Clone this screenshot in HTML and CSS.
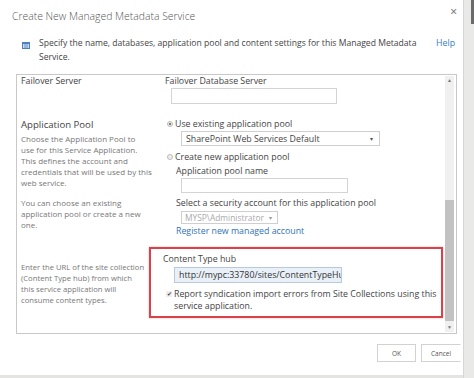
FILE: index.html
```html
<!DOCTYPE html>
<html>
<head>
<meta charset="utf-8">
<link rel="stylesheet" href="styles.css">
</head>
<body>
<div class="page">
  <div class="dialog">
    <div class="titlebar">
      <span class="title">Create New Managed Metadata Service</span>
      <span class="close">×</span>
    </div>
    <div class="intro">
      <svg class="icon" width="8" height="7" viewBox="0 0 8 7">
        <rect x="0.5" y="0.5" width="7" height="6" fill="#c9d9ee" stroke="#4f7fbf"/>
        <rect x="0.5" y="0.5" width="7" height="1.5" fill="#4f7fbf"/>
        <line x1="3" y1="2" x2="3" y2="7" stroke="#4f7fbf" stroke-width="0.8"/>
        <line x1="5" y1="2" x2="5" y2="7" stroke="#4f7fbf" stroke-width="0.8"/>
      </svg>
      <p class="intro-text">Specify the name, databases, application pool and content settings for this Managed Metadata<br>Service.</p>
      <a class="help">Help</a>
    </div>
    <div class="panel">
      <div class="panel-content">
        <section class="row row-failover">
          <div class="left"><div class="section-title">Failover Server</div></div>
          <div class="right">
            <div class="label">Failover Database Server</div>
            <div class="textbox tb-failover"></div>
          </div>
        </section>
        <section class="row row-pool">
          <div class="left">
            <div class="section-title big">Application Pool</div>
            <p class="desc">Choose the Application Pool to<br>use for this Service Application.<br>This defines the account and<br>credentials that will be used by this<br>web service.</p>
            <p class="desc desc-gap">You can choose an existing<br>application pool or create a new<br>one.</p>
          </div>
          <div class="right">
            <div class="option"><span class="radio checked"></span>Use existing application pool</div>
            <div class="select sel-pool"><span>SharePoint Web Services Default</span><span class="arrow">▾</span></div>
            <div class="option opt-new"><span class="radio"></span>Create new application pool</div>
            <div class="label indent">Application pool name</div>
            <div class="textbox tb-poolname"></div>
            <div class="label indent lbl-account">Select a security account for this application pool</div>
            <div class="select sel-account"><span>MYSP\Administrator</span><span class="arrow">▾</span></div>
            <a class="link indent">Register new managed account</a>
          </div>
        </section>
        <section class="row row-hub">
          <div class="left">
            <p class="desc desc-hub">Enter the URL of the site collection<br>(Content Type hub) from which<br>this service application will<br>consume content types.</p>
          </div>
          <div class="right-hub">
            <div class="redbox">
              <div class="label">Content Type hub</div>
              <div class="textbox tb-hub">http://mypc:33780/sites/ContentTypeHub</div>
              <div class="check-row">
                <span class="checkbox">✔</span>
                <span class="check-text">Report syndication import errors from Site Collections using this<br>service application.</span>
              </div>
            </div>
          </div>
        </section>
      </div>
      <div class="scrollbar">
        <span class="sb-arrow">▲</span>
        <div class="sb-track"><div class="sb-thumb"></div></div>
        <span class="sb-arrow">▼</span>
      </div>
    </div>
    <div class="buttons">
      <button class="btn">OK</button>
      <button class="btn btn-cancel">Cancel</button>
    </div>
  </div>
  <div class="side"><div class="side-bar"></div></div>
</div>
</body>
</html>
```

FILE: styles.css
```css
* { box-sizing: border-box; }
html, body { margin: 0; padding: 0; }
body {
  background: #e4e4e2;
  font-family: "Open Sans", "Noto Sans", sans-serif;
  color: #444;
}
.page {
  display: flex;
  width: 474px;
  height: 378px;
  overflow: hidden;
}
.dialog {
  width: 463px;
  height: 375px;
  background: #fff;
  display: flex;
  flex-direction: column;
  flex: none;
}
.side {
  flex: 1;
  background: #e9e9e7;
  border-left: 1px solid #d6d6d6;
  display: flex;
  justify-content: flex-end;
}
.side-bar {
  width: 3px;
  height: 24px;
  background: #6a6a6a;
}
.titlebar {
  display: flex;
  justify-content: space-between;
  align-items: center;
  padding: 6px 6px 0 12px;
  height: 26px;
}
.title {
  font-size: 10.4px;
  font-weight: 300;
  color: #555;
}
.close {
  font-size: 12px;
  color: #666;
  line-height: 1;
  margin-top: -8px;
}
.intro {
  display: flex;
  align-items: flex-start;
  padding: 10px 0 0 22px;
  height: 48px;
}
.icon {
  margin-top: 6px;
  flex: none;
}
.intro-text {
  margin: 0 0 0 9px;
  width: 390px;
  font-size: 8.6px;
  line-height: 14px;
  color: #444;
  white-space: nowrap;
}
.help {
  margin-left: 7px;
  font-size: 8.8px;
  line-height: 14px;
  color: #3a7dc0;
}
.panel {
  margin-left: 16px;
  width: 441px;
  height: 260px;
  border: 1px solid #c8c8c8;
  display: flex;
  overflow: hidden;
}
.panel-content {
  flex: 1;
  overflow: hidden;
}
.row {
  display: grid;
  grid-template-columns: 133px 1fr;
}
.left { padding-left: 4px; }
.right { padding-left: 15px; }
.section-title {
  font-size: 8.8px;
  line-height: 12px;
  color: #444;
}
.section-title.big {
  font-size: 9.6px;
  line-height: 14px;
  margin-top: 1px;
}
.label {
  font-size: 8.8px;
  line-height: 14px;
  color: #444;
}
.indent { margin-left: 11px; display: block; }
.textbox {
  border: 1px solid #d4d4d4;
  background: #fff;
  height: 16px;
}
.row-failover .label { line-height: 12px; }
.tb-failover { margin: 1px 0 0 6px; width: 166px; }
.row-pool { margin-top: 13px; }
.desc {
  margin: 1px 0 0;
  font-size: 8px;
  line-height: 11px;
  color: #777;
  white-space: nowrap;
}
.desc-gap { margin-top: 9px; }
.option {
  display: flex;
  align-items: center;
  font-size: 8.8px;
  line-height: 14px;
  color: #444;
  margin-left: 2px;
}
.radio {
  width: 6px;
  height: 6px;
  border-radius: 50%;
  border: 1px solid #bbb;
  background: #eee;
  margin-right: 2px;
  display: inline-flex;
  align-items: center;
  justify-content: center;
}
.radio.checked::after {
  content: "";
  width: 2px;
  height: 2px;
  border-radius: 50%;
  background: #555;
}
.select {
  display: flex;
  justify-content: space-between;
  align-items: center;
  border: 1px solid #cfcfcf;
  font-size: 8.8px;
  color: #444;
  padding: 0 6px 0 4px;
  margin-left: 16px;
}
.sel-pool { width: 199px; height: 15px; }
.arrow { font-size: 6px; color: #555; }
.opt-new { margin-top: 4px; }
.tb-poolname { margin-left: 16px; width: 167px; height: 15px; }
.lbl-account { margin-top: 3px; }
.sel-account {
  width: 97px;
  height: 13px;
  margin-top: 1px;
  color: #aaa;
  font-size: 8.4px;
  padding: 0 5px 0 3px;
}
.sel-account .arrow { color: #999; }
.link {
  font-size: 8.8px;
  line-height: 14px;
  color: #2f73b5;
}
.row-hub { margin-top: 9px; }
.right-hub { padding-left: 0; padding-right: 1px; }
.desc.desc-hub { margin-top: 15px; font-size: 7.7px; }
.redbox {
  border: 2px solid #d9424a;
  box-shadow: 0 0 2px rgba(200, 60, 60, 0.35);
  padding: 3px 4px 4px 12px;
  width: 294px;
  margin-left: -1px;
}
.tb-hub {
  margin: 1px 0 0 11px;
  width: 168px;
  height: 16px;
  background: #e9f0f8;
  border-color: #b9c9dc;
  font-size: 8.8px;
  line-height: 14px;
  color: #333;
  padding-left: 4px;
  white-space: nowrap;
  overflow: hidden;
}
.check-row {
  display: flex;
  margin-top: 5px;
  margin-left: 3px;
}
.checkbox {
  width: 6px;
  height: 6px;
  font-size: 6px;
  line-height: 6px;
  color: #444;
  background: #eee;
  margin-top: 3px;
  margin-right: 2px;
  flex: none;
  text-align: center;
}
.check-text {
  font-size: 8.8px;
  line-height: 12px;
  color: #444;
  white-space: nowrap;
}
.scrollbar {
  width: 9px;
  margin: 1px 2px 1px 0;
  background: #f0f0f0;
  display: flex;
  flex-direction: column;
  align-items: center;
}
.sb-arrow {
  font-size: 5px;
  color: #777;
  line-height: 9px;
  height: 9px;
}
.sb-track {
  flex: 1;
  width: 100%;
  display: flex;
  flex-direction: column;
  justify-content: flex-end;
}
.sb-thumb {
  height: 121px;
  background: #c2c2c2;
  margin-bottom: 2px;
}
.buttons {
  display: flex;
  justify-content: flex-end;
  gap: 5px;
  margin-top: 10px;
  padding-right: 2px;
}
.btn {
  font-family: "Open Sans", "Noto Sans", sans-serif;
  font-size: 6.5px;
  color: #555;
  background: #fff;
  border: 1px solid #d2d2d2;
  height: 18px;
  width: 39px;
  padding: 0;
}
.btn-cancel { width: 40px; border-right-color: transparent; }
```
